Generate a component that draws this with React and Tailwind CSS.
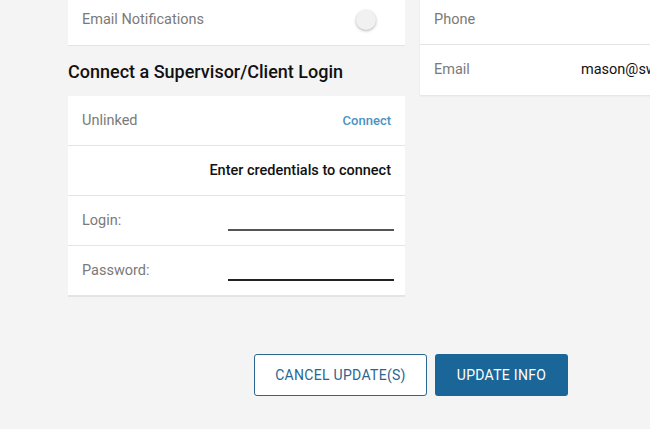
const font = { fontFamily: "Roboto, 'Liberation Sans', sans-serif" }

const Row = ({ children, last }) => (
  <div className={`flex h-[50px] items-center justify-between px-[14px] ${last ? "" : "border-b border-[#e4e4e4]"}`}>
    {children}
  </div>
)

const Label = ({ children }) => <span className="text-[14.5px] text-[#7a7a7a]">{children}</span>

const App = () => {
  return (
    <div className="h-[429px] w-[650px] overflow-hidden bg-[#f4f4f4]" style={font}>
      <div className="-mt-[5px] flex gap-[15px] pl-[68px]">
        <div className="w-[337px] shrink-0">
          <div className="bg-white">
            <Row last>
              <Label>Email Notifications</Label>
              <span className="mr-[15px] h-[20px] w-[20px] rounded-full bg-[#f1f1f1] shadow-[0_1px_3px_rgba(0,0,0,0.3)]" />
            </Row>
          </div>
          <div className="border-t border-[#e4e4e4]" />
          <h2 className="flex h-[50px] items-center text-[18px] font-medium text-[#111]">
            Connect a Supervisor/Client Login
          </h2>
          <div className="bg-white">
            <Row>
              <Label>Unlinked</Label>
              <button className="text-[13px] font-medium text-[#4b93c2]">Connect</button>
            </Row>
            <Row>
              <span />
              <span className="text-[14.5px] font-medium text-[#111]">Enter credentials to connect</span>
            </Row>
            <Row>
              <Label>Login:</Label>
              <div className="mr-[-3px] mt-[18px] h-[2px] w-[166px] bg-[#555]" />
            </Row>
            <Row>
              <Label>Password:</Label>
              <div className="mr-[-3px] mt-[18px] h-[2px] w-[166px] bg-[#222]" />
            </Row>
          </div>
          <div className="h-[1px] bg-[#e4e4e4]" />
        </div>
        <div className="w-[400px] shrink-0 self-start bg-white shadow-[0_1px_2px_rgba(0,0,0,0.08)]">
          <Row>
            <Label>Phone</Label>
          </Row>
          <div className="flex h-[50px] items-center px-[14px]">
            <span className="w-[147px] shrink-0 text-[14.5px] text-[#7a7a7a]">Email</span>
            <span className="whitespace-nowrap text-[14.5px] text-[#111]">mason@swiftpro.com</span>
          </div>
        </div>
      </div>
      <div className="mt-[57px] flex gap-[8px] pl-[254px]">
        <button className="h-[42px] w-[173px] rounded-[3px] border border-[#2a6690] bg-white text-[14px] tracking-[0.3px] text-[#2a6690]">
          CANCEL UPDATE(S)
        </button>
        <button className="h-[42px] w-[133px] rounded-[3px] bg-[#1a6698] text-[14px] tracking-[0.3px] text-white">
          UPDATE INFO
        </button>
      </div>
    </div>
  )
}

export default App
